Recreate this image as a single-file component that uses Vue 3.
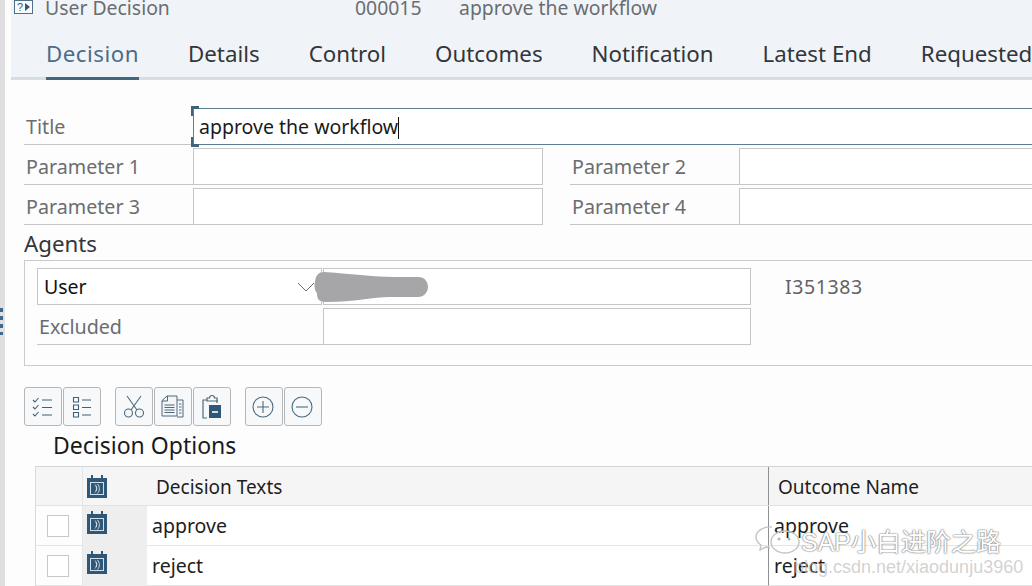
<script setup>
const tabs = ['Decision', 'Details', 'Control', 'Outcomes', 'Notification', 'Latest End', 'Requested']
const rows = ['approve', 'reject']
</script>

<template>
  <div class="page">
    <div class="rail">
      <span class="grip"></span>
    </div>
    <div class="main">
      <header class="head">
        <div class="titlebar">
          <svg class="helpicon" width="20" height="16" viewBox="0 0 20 16">
            <rect x="0.5" y="1.5" width="18" height="13" fill="#f8fafc" stroke="#4d7189" />
            <text x="3" y="12" font-size="11" fill="#35586f" font-family="Liberation Sans">?</text>
            <path d="M11 4l5 4-5 4z" fill="#35586f" />
          </svg>
          <span class="t1">User Decision</span>
          <span class="t2">000015</span>
          <span class="t3">approve the workflow</span>
        </div>
        <nav class="tabs">
          <span v-for="(t, i) in tabs" :key="t" class="tab" :class="{ on: i === 0 }">{{ t }}</span>
        </nav>
      </header>

      <section class="form">
        <div class="row title">
          <label class="lab">Title</label>
          <div class="input focus">
            <i class="br tl"></i><i class="br bl"></i>
            <span class="val">approve the workflow</span><span class="caret"></span>
          </div>
        </div>
        <div class="row param">
          <label class="lab">Parameter 1</label>
          <div class="input small"></div>
          <label class="lab right">Parameter 2</label>
          <div class="input grow"></div>
        </div>
        <div class="row param">
          <label class="lab">Parameter 3</label>
          <div class="input small"></div>
          <label class="lab right">Parameter 4</label>
          <div class="input grow"></div>
        </div>

        <h2 class="agents">Agents</h2>
        <div class="box">
          <div class="agentrow">
            <div class="select">
              <span>User</span>
              <svg width="20" height="10" viewBox="0 0 20 10"><path d="M1 1l8 8 8-8" fill="none" stroke="#5a7180" stroke-width="1" /></svg>
            </div>
            <div class="input agent"></div>
            <span class="uid">I351383</span>
            <svg class="blob" width="116" height="32" viewBox="0 0 116 32">
              <path d="M10 1C40 3 62 6 80 6h24c7 0 10 5 10 10s-4 10-10 10H76C60 26 40 31 12 31 4 31 3 27 3 22 1 20 0 16 1 10 2 4 5 1 10 1z" fill="#a6a6a8" />
            </svg>
          </div>
          <div class="agentrow ex">
            <label class="exlab">Excluded</label>
            <div class="input agent"></div>
          </div>
        </div>

        <div class="toolbar">
          <div class="group">
            <button class="btn">
              <svg width="22" height="22" viewBox="0 0 22 22" fill="none" stroke="#3f6078" stroke-width="1.1">
                <path d="M1 4l2 2 3.500-4M1 11l2 2 3.500-4M1 18l2 2 3.500-4" />
                <path d="M10 4h10M10 11.500h10M10 19h10" />
              </svg>
            </button>
            <button class="btn">
              <svg width="22" height="22" viewBox="0 0 22 22" fill="none" stroke="#3f6078" stroke-width="1.1">
                <path d="M2.500 1.500h5v4.500h-5zM2.500 9h5v4.500h-5zM2.500 16.500h5V21h-5z" />
                <path d="M11 4h9M11 11.500h9M11 19h9" />
              </svg>
            </button>
          </div>
          <div class="group">
            <button class="btn">
              <svg width="22" height="24" viewBox="0 0 22 24" fill="none" stroke="#4a6a80" stroke-width="1.1">
                <circle cx="5.500" cy="18" r="4" /><circle cx="16.500" cy="18" r="4" />
                <path d="M8 15L18 1M14 15L4 1" />
              </svg>
            </button>
            <button class="btn">
              <svg width="24" height="24" viewBox="0 0 24 24" fill="none" stroke="#4a6a80" stroke-width="1">
                <path d="M16 21H1V5.500L6 1h10z" fill="#f3f5f7" />
                <path d="M1 6h5.500V1" />
                <path d="M16 5h6v17h-6" />
                <path d="M3.500 10h10M3.500 12.500h10M3.500 15h10M3.500 17.500h10M18 9h2.500M18 12h2.500M18 15h2.500M18 18h2.500" />
              </svg>
            </button>
            <button class="btn">
              <svg width="22" height="26" viewBox="0 0 22 26" fill="none" stroke="#4a6a80" stroke-width="1.200">
                <path d="M6 24H2V6h14v3" />
                <path d="M6 7V4h2.500a2.500 2.500 0 0 1 5 0H16v3z" fill="#f7f8f9" />
                <rect x="8" y="11" width="12" height="13" fill="#2f5777" stroke="none" />
                <path d="M11 18h6" stroke="#fff" stroke-width="1.600" />
              </svg>
            </button>
          </div>
          <div class="group">
            <button class="btn shift">
              <svg width="22" height="22" viewBox="0 0 22 22" fill="none" stroke="#4a6a80" stroke-width="1.100">
                <circle cx="11" cy="11" r="10" /><path d="M11 5v12M5 11h12" />
              </svg>
            </button>
            <button class="btn shift">
              <svg width="22" height="22" viewBox="0 0 22 22" fill="none" stroke="#4a6a80" stroke-width="1.100">
                <circle cx="11" cy="11" r="10" /><path d="M5 11h12" />
              </svg>
            </button>
          </div>
        </div>

        <h3 class="options">Decision Options</h3>

        <div class="table">
          <div class="tr th">
            <div class="c c1"></div>
            <div class="c c2">
              <svg class="cal" width="20" height="23" viewBox="0 0 20 23">
                <path d="M0 3h20v20H0z" fill="#2f5777" />
                <path d="M4 0h2v5H4zM14 0h2v5h-2z" fill="#2f5777" />
                <rect x="3.500" y="7.500" width="13" height="12" fill="#2f5777" stroke="#cfe0ec" />
                <path d="M8 9.500c2 2 2 6 0 8M10.500 9c2.500 2.500 2.500 7 0 9.500M9 11c1 1 1 4 0 5" fill="none" stroke="#d9e7f0" stroke-width="0.900" />
              </svg>
            </div>
            <div class="c c3 headtext">Decision Texts</div>
            <div class="c c4 headtext">Outcome Name</div>
          </div>
          <div v-for="r in rows" :key="r" class="tr">
            <div class="c c1"><span class="check"></span></div>
            <div class="c c2 grey">
              <svg class="cal up" width="20" height="23" viewBox="0 0 20 23">
                <path d="M0 3h20v20H0z" fill="#2f5777" />
                <path d="M4 0h2v5H4zM14 0h2v5h-2z" fill="#2f5777" />
                <rect x="3.500" y="7.500" width="13" height="12" fill="#2f5777" stroke="#cfe0ec" />
                <path d="M8 9.500c2 2 2 6 0 8M10.500 9c2.500 2.500 2.500 7 0 9.500M9 11c1 1 1 4 0 5" fill="none" stroke="#d9e7f0" stroke-width="0.900" />
              </svg>
            </div>
            <div class="c c3">{{ r }}</div>
            <div class="c c4 cell4">{{ r }}</div>
          </div>
        </div>
      </section>
    </div>

    <div class="mark">
      <svg class="wechat" width="46" height="30" viewBox="0 0 46 30" fill="none" stroke-width="1.400">
        <path d="M17 2C9 1 1 6 1 12c0 3 2 6 5 8l-1 5 6-3c2 .5 3 .7 4 .7" stroke="#c4c4c4" />
        <ellipse cx="30" cy="17" rx="14" ry="11" stroke="#c4c4c4" />
        <circle cx="24" cy="14" r="1.500" fill="#b4b4b4" /><circle cx="34" cy="14" r="1.500" fill="#b4b4b4" />
      </svg>
      <span class="marktext">SAP小白进阶之路</span>
    </div>
    <span class="csdn">blog.csdn.net/xiaodunju3960</span>
  </div>
</template>

<style>
html, body { margin: 0; background: #fff; }
</style>

<style scoped>
.page {
  position: relative;
  display: flex;
  width: 1032px;
  height: 586px;
  overflow: hidden;
  font-family: "Noto Sans", "Open Sans", sans-serif;
  color: #222;
  background: #fdfdfe;
}
.rail {
  position: relative;
  flex: none;
  width: 5px;
  margin-right: 6px;
  background: #dfdfe2;
}
.grip {
  position: absolute;
  left: 0;
  top: 308px;
  width: 3px;
  height: 27px;
  background: repeating-linear-gradient(#3f6a8c 0 4px, transparent 4px 8px);
}
.main { flex: 1; min-width: 0; }
.head {
  height: 77px;
  background: #f0f4f8;
  border-bottom: 3px solid #d6dee3;
}
.titlebar {
  display: flex;
  align-items: center;
  height: 14px;
  padding-left: 3px;
  font-size: 19.4px;
  color: #6a6d70;
}
.helpicon { flex: none; }
.t1 { margin-left: 11px; width: 310px; }
.t2 { width: 104px; }
.tabs {
  display: flex;
  gap: 49px;
  height: 63px;
  padding-left: 35px;
  white-space: nowrap;
}
.tab {
  height: 60px;
  line-height: 80px;
  font-size: 22.3px;
  color: #32363a;
  flex: none;
}
.tab.on {
  color: #4a6d8a;
  height: 66px;
  box-sizing: border-box;
  border-bottom: 3px solid #41677f;
  position: relative;
  letter-spacing: 0.5px;
}
.form {
  padding: 28px 0 0 13px;
  font-size: 19.500px;
}
.row { display: flex; }
.title { height: 37px; }
.param { height: 37px; margin-top: 3px; }
.lab {
  flex: none;
  box-sizing: border-box;
  width: 169px;
  padding-left: 2px;
  height: 37px;
  line-height: 37px;
  font-size: 19.700px;
  color: #6a6d70;
  border-bottom: 1px solid #c4c6c8;
}
.lab.right { width: 169px; margin-left: 27px; }
.input {
  box-sizing: border-box;
  background: #fff;
  border: 1px solid #c4c6c8;
  height: 37px;
}
.input.small { width: 350px; flex: none; }
.input.grow { flex: 1; border-right: 0; }
.input.focus {
  position: relative;
  flex: 1;
  height: 37px;
  border: 0;
  border-top: 1px solid #5d7d92;
  border-bottom: 1px solid #5d7d92;
  border-left: 1px solid #5d7d92;
  padding-left: 5px;
  line-height: 35px;
  color: #111;
  white-space: nowrap;
}
.val { color: #1a1a1a; }
.caret {
  display: inline-block;
  width: 1px;
  height: 22px;
  background: #111;
  vertical-align: -5px;
}
.br {
  position: absolute;
  left: -3px;
  width: 6px;
  height: 7px;
  border-left: 2px solid #3f6478;
}
.br.tl { top: -3px; border-top: 3px solid #3f6478; }
.br.bl { bottom: -3px; border-bottom: 3px solid #3f6478; }
.agents {
  margin: 3px 0 0;
  height: 32px;
  font-size: 22.300px;
  font-weight: 400;
  line-height: 31px;
  color: #32363a;
}
.box {
  box-sizing: border-box;
  height: 106px;
  padding: 7px 0 0 12px;
  border: 1px solid #c9cbcd;
  border-right: 0;
}
.agentrow {
  position: relative;
  display: flex;
  align-items: center;
  height: 37px;
  white-space: nowrap;
}
.agentrow.ex { margin-top: 3px; }
.select {
  display: flex;
  align-items: center;
  justify-content: space-between;
  box-sizing: border-box;
  width: 285px;
  height: 37px;
  margin-right: 1px;
  padding: 0 4px 0 6px;
  background: #fff;
  border: 1px solid #c4c6c8;
  color: #111;
}
.input.agent { width: 428px; flex: none; }
.uid { margin-left: 34px; color: #5f6366; letter-spacing: 0.6px; }
.blob { position: absolute; left: 277px; top: 3px; }
.exlab {
  box-sizing: border-box;
  width: 286px;
  height: 37px;
  line-height: 37px;
  padding-left: 2px;
  font-size: 19.700px;
  color: #6a6d70;
  border-bottom: 1px solid #c4c6c8;
}
.toolbar {
  display: flex;
  gap: 14px;
  margin-top: 21px;
}
.group { display: flex; gap: 1px; }
.btn {
  display: flex;
  align-items: center;
  justify-content: center;
  box-sizing: border-box;
  width: 38px;
  height: 39px;
  padding: 0;
  background: #f7f8f9;
  border: 1px solid #b4b7ba;
  border-radius: 3px;
}
.btn.shift { padding-right: 2px; }
.options {
  margin: 3px 0 0 29px;
  height: 37px;
  font-size: 23px;
  font-weight: 400;
  line-height: 32px;
  color: #1a1a1a;
}
.table { margin-left: 11px; border-left: 1px solid #d8d9da; border-top: 1px solid #d4d5d6; }
.tr { display: flex; height: 40px; }
.tr.th { height: 39px; background: #f5f5f6; border-bottom: 1px solid #e2e3e4; box-sizing: border-box; }
.c { box-sizing: border-box; flex: none; display: flex; align-items: center; height: 100%; }
.c1 { width: 46px; padding-right: 2px; justify-content: center; border-bottom: 1px solid #e4e5e6; }
.th .c1 { border-bottom: 0; }
.c2 { width: 65px; padding-left: 4px; border-left: 1px solid #e6e7e8; }
.grey { background: #eeeeef; }
.c3 {
  width: 621px;
  padding-left: 5px;
  background: #fff;
  border-bottom: 1px solid #e4e5e6;
  color: #1d1d1d;
}
.th .c3, .th .c4 { background: transparent; border-bottom: 0; }
.c4 {
  flex: 1;
  padding-left: 5px;
  background: #fff;
  border-left: 1px solid #8e9092;
  border-bottom: 1px solid #e4e5e6;
  color: #1d1d1d;
}
.headtext { font-size: 19px; padding-left: 9px; padding-top: 2px; color: #1d1d1d; }
.cell4 { align-items: flex-start; line-height: 40px; }
.check {
  box-sizing: border-box;
  width: 22px;
  height: 22px;
  background: #fff;
  border: 1px solid #c6c8ca;
}
.cal.up { margin-top: -8px; }
.mark {
  position: absolute;
  left: 755px;
  top: 522px;
  display: flex;
  align-items: center;
  pointer-events: none;
}
.marktext {
  font-family: "Liberation Sans", "Noto Sans CJK SC", sans-serif;
  font-size: 25px;
  color: #fff;
  text-shadow: 0 0 2px #777, 0 0 1px #555;
  white-space: nowrap;
}
.csdn {
  position: absolute;
  left: 794px;
  top: 557px;
  font-family: "Liberation Sans", sans-serif;
  font-size: 18px;
  color: rgba(190, 190, 190, 0.7);
  white-space: nowrap;
}
</style>
